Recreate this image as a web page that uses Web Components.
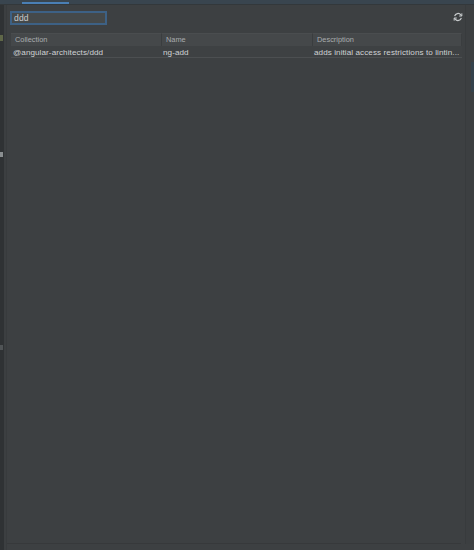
<!DOCTYPE html>
<html><head><meta charset="utf-8"><style>
html,body{margin:0;padding:0;height:100%;background:#3c3f41;overflow:hidden}
body{font-family:"Liberation Sans",Arial,sans-serif}
</style></head><body>
<schematics-window>
  <schematics-toolbar slot="toolbar" value="ddd"></schematics-toolbar>
  <schematics-table></schematics-table>
</schematics-window>
<script>
class SchematicsWindow extends HTMLElement{constructor(){super();this.attachShadow({mode:'open'}).innerHTML=`
<style>
:host{display:flex;flex-direction:column;width:474px;height:550px;box-sizing:border-box;background:#3d4042;position:relative}
.top{height:4px;flex:none;background:#39454f;padding-left:22px;display:flex;align-items:flex-end;border-bottom:1px solid #33383b}
.tab{width:47px;height:2px;background:#4a7fb5}
.mid{flex:1;display:flex;min-height:0}
.left{width:4px;flex:none;background:#2f3234}
.gut{width:2px;flex:none;background:#3c3f41;border-right:1px solid #383b3d}
.main{flex:1;min-width:0;display:flex;flex-direction:column;padding:6px 0 0 3px;border-bottom:1px solid #37393b;margin-bottom:6px}
.right{width:8px;flex:none;margin-left:4px;border-left:1px solid #383b3d;background:#3c3f41;margin-bottom:6px}
.marker{position:absolute;right:0;top:62px;width:3px;height:30px;background:#34424c}
.m{position:absolute;left:0;background:#8a8e90}
.a{top:35px;height:6px;width:3px;background:#5f6748}
.b{top:152px;height:5px;width:3px}
.c{top:345px;height:5px;width:3px;background:#505456}
</style>
<div class="top"><div class="tab"></div></div>
<div class="mid"><div class="left"></div><div class="gut"></div>
<div class="main"><slot name="toolbar"></slot><slot></slot></div>
<div class="right"></div></div>
<div class="marker"></div><div class="m a"></div><div class="m b"></div><div class="m c"></div>`}}
customElements.define('schematics-window',SchematicsWindow);

class SchematicsToolbar extends HTMLElement{constructor(){super();this.attachShadow({mode:'open'}).innerHTML=`
<style>
:host{display:flex;justify-content:space-between;align-items:flex-start;height:16px;margin-bottom:6px}
.input{box-sizing:border-box;width:97px;height:14px;border:2px solid #3d6185;background:#45494a;color:#c9ccce;font-size:8.5px;line-height:11px;padding-left:2px;letter-spacing:.2px}
svg{display:block;margin-right:-2px;margin-top:1px}
</style>
<div class="input">${this.getAttribute('value')||'ddd'}</div>
<svg width="10" height="10" viewBox="0 0 12 12" fill="none" stroke="#c6c9cb" stroke-width="1.5"><path d="M2 5a4.2 4.2 0 0 1 7.4-1.6L10.5 4.6M10 7a4.2 4.2 0 0 1-7.4 1.6L1.5 7.4"/><path d="M10.6 1.6v3.2H7.4M1.4 10.4V7.2h3.2" stroke-width="1.2"/></svg>`}}
customElements.define('schematics-toolbar',SchematicsToolbar);

class SchematicsTable extends HTMLElement{constructor(){super();this.attachShadow({mode:'open'}).innerHTML=`
<style>
:host{display:grid;grid-template-columns:151px 151px 149px;width:451px;margin-left:1px;font-size:8.1px}
.h{height:13px;box-sizing:border-box;background:#45484a;color:#a9adaf;padding-left:4px;line-height:12px;font-size:7.4px;border-top:1px solid #4a4d4f;border-right:1px solid #3a3d3f;white-space:nowrap}
.c{height:12px;box-sizing:border-box;color:#cfd2d4;line-height:13px;padding-left:1px;border-bottom:1px solid #4c4f51;white-space:nowrap;background:#3e4143;letter-spacing:.08px}
.c:first-of-type{padding-left:2px}
</style>
<div class="h">Collection</div><div class="h">Name</div><div class="h">Description</div>
<div class="c" style="padding-left:2px">@angular-architects/ddd</div><div class="c">ng-add</div><div class="c">adds initial access restrictions to lintin...</div>`}}
customElements.define('schematics-table',SchematicsTable);
</script></body></html>
